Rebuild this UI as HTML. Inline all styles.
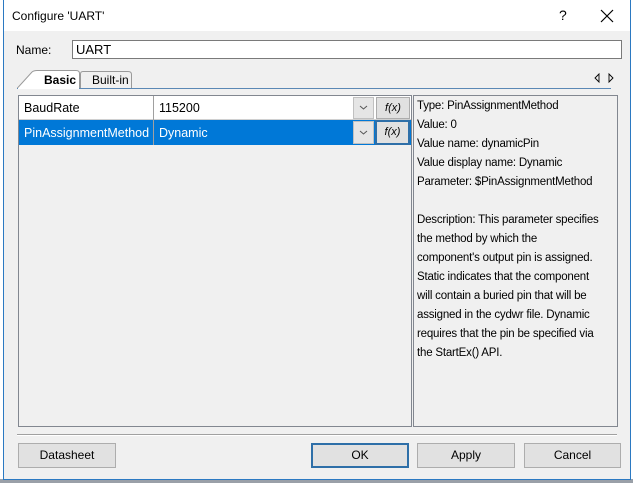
<!DOCTYPE html>
<html><head><style>
*{margin:0;padding:0;box-sizing:border-box}
body{width:633px;height:483px;overflow:hidden;background:#6b6b6b;font-family:"Liberation Sans",sans-serif;font-size:12px;color:#000;position:relative}
.a{position:absolute}
.t{white-space:nowrap}
.btn{position:absolute;top:443px;height:25px;background:#e1e1e1;border:1px solid #adadad;text-align:center;line-height:23px;font-size:12px}
</style></head><body>
<div class="a" style="left:0;top:0;width:633px;height:483px;background:#fff"></div>
<div class="a" style="left:0;top:479px;width:633px;height:4px;background:#9aa0a8"></div>
<div class="a" style="left:3px;top:0;width:628px;height:480px;background:#f0f0f0;border:1px solid #2b79c2;border-top:none"></div>
<div class="a" style="left:4px;top:0;width:626px;height:31px;background:#fff"></div>
<div class="a t" style="left:12px;top:9px;font-size:12px">Configure 'UART'</div>
<div class="a t" style="left:559px;top:7px;font-size:14px">?</div>
<svg class="a" style="left:600px;top:9px" width="14" height="14"><path d="M1 1L13 13M13 1L1 13" stroke="#000" stroke-width="1.2"/></svg>
<div class="a t" style="left:16px;top:43px">Name:</div>
<div class="a" style="left:72px;top:40px;width:550px;height:19px;background:#fff;border:1px solid #7a7a7a"></div>
<div class="a t" style="left:76px;top:42px;font-size:13px">UART</div>
<!-- tabs -->
<svg class="a" style="left:17px;top:68px" width="600" height="22">
<path d="M63.5 21V6Q63.5 3.5 66 3.5H111Q114.5 3.5 114.5 6.5V21" fill="#f0f0f0" stroke="#9a9a9a"/>
<path d="M0 20.5L15 4Q17 2.5 20 2.5H59Q62.5 2.5 62.5 5.5V21" fill="#fff" stroke="#9a9a9a"/>
<line x1="0" y1="20.5" x2="594" y2="20.5" stroke="#5b88b5"/>
<line x1="1" y1="20.5" x2="62" y2="20.5" stroke="#fff" stroke-width="1.2"/>
<path d="M582 6L578 10L582 14Z M592 6L596 10L592 14Z" fill="none" stroke="#000" stroke-width="0.9"/>
</svg>
<div class="a t" style="left:44px;top:73px;font-weight:bold">Basic</div>
<div class="a t" style="left:92px;top:73px">Built-in</div>
<!-- grid -->
<div class="a" style="left:18px;top:95px;width:394px;height:332px;border:1px solid #828790;background:#f0f0f0"></div>
<div class="a" style="left:19px;top:96px;width:392px;height:24px;background:#fff;border-bottom:1px solid #d0d0d0"></div>
<div class="a" style="left:19px;top:120px;width:392px;height:25px;background:#0078d7"></div>
<div class="a" style="left:153px;top:96px;width:1px;height:49px;background:#a0a0a0"></div>
<div class="a t" style="left:24px;top:101px;font-size:12.5px">BaudRate</div>
<div class="a t" style="left:159px;top:101px;font-size:12.5px">115200</div>
<div class="a t" style="left:24px;top:126px;font-size:12.5px;color:#fff">PinAssignmentMethod</div>
<div class="a t" style="left:159px;top:126px;font-size:12.5px;color:#fff">Dynamic</div>
<div class="a" style="left:353px;top:97px;width:21px;height:22px;background:#e5e5e5;border:1px solid #c0c0c0"></div>
<div class="a" style="left:353px;top:121px;width:21px;height:23px;background:#e5e5e5;border:1px solid #c0c0c0"></div>
<svg class="a" style="left:359px;top:104px" width="10" height="32"><path d="M1 2L4.5 5L8 2M1 27L4.5 30L8 27" fill="none" stroke="#555"/></svg>
<div class="a" style="left:376px;top:97px;width:34px;height:22px;background:#e1e1e1;border:1px solid #adadad;text-align:center;font-style:italic;font-size:11px;line-height:20px">f(x)</div>
<div class="a" style="left:375px;top:120px;width:35px;height:25px;background:#e1e1e1;border:2px solid #2e6fa8;text-align:center;font-style:italic;font-size:11px;line-height:21px">f(x)</div>
<!-- desc -->
<div class="a" style="left:413px;top:95px;width:205px;height:332px;border:1px solid #828790;background:#f0f0f0"></div>
<div class="a t" style="left:417px;top:97px;line-height:19px;font-size:11.5px;letter-spacing:-0.2px">Type: PinAssignmentMethod<br>Value: 0<br>Value name: dynamicPin<br>Value display name: Dynamic<br>Parameter: $PinAssignmentMethod<br><br>Description: This parameter specifies<br>the method by which the<br>component's output pin is assigned.<br>Static indicates that the component<br>will contain a buried pin that will be<br>assigned in the cydwr file. Dynamic<br>requires that the pin be specified via<br>the StartEx() API.</div>
<div class="a" style="left:17px;top:434px;width:600px;height:1px;background:#a0a0a0"></div>
<div class="a" style="left:17px;top:435px;width:600px;height:1px;background:#fff"></div>
<div class="btn" style="left:18px;width:98px">Datasheet</div>
<div class="btn" style="left:311px;width:98px;border:2px solid #2e6fa8;line-height:21px">OK</div>
<div class="btn" style="left:417px;width:98px">Apply</div>
<div class="btn" style="left:524px;width:97px">Cancel</div>
</body></html>
